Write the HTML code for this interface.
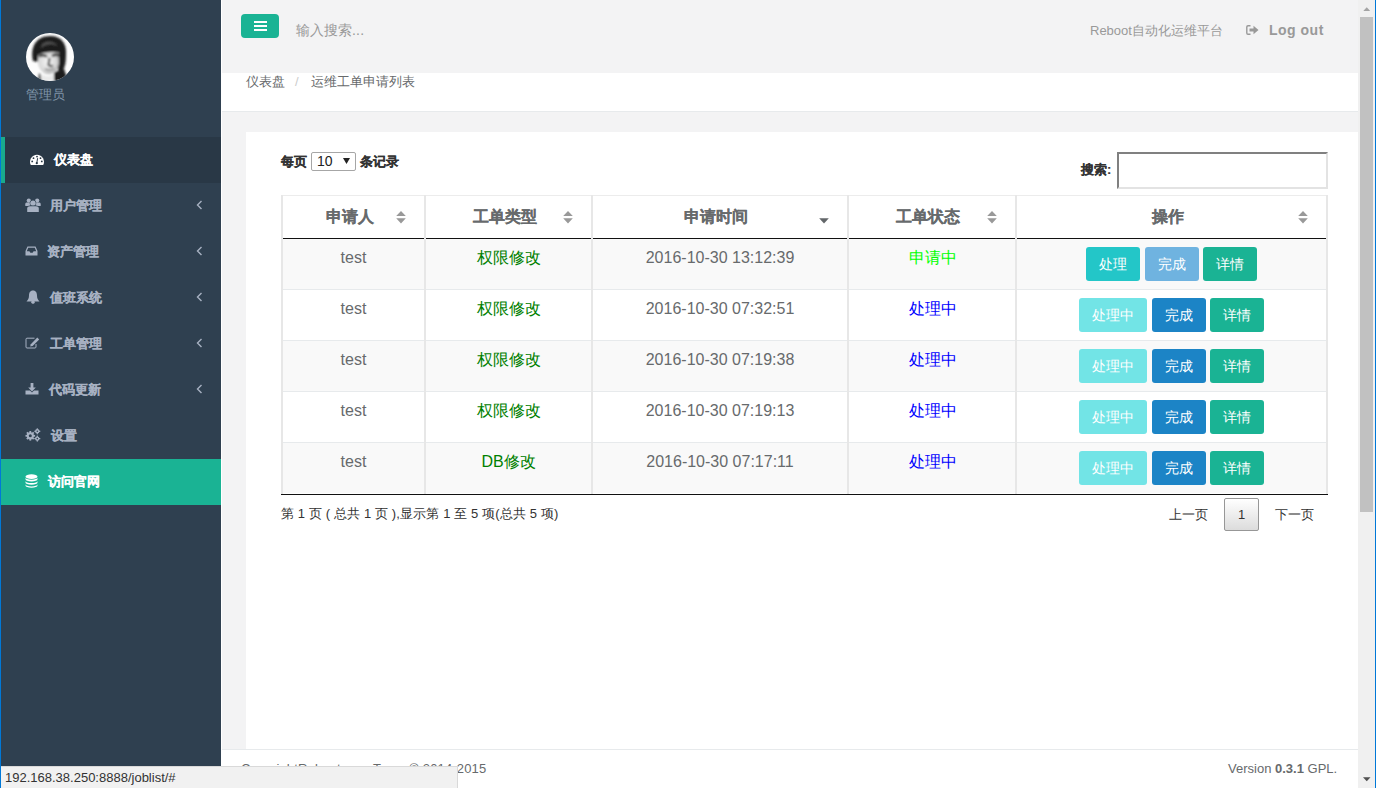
<!DOCTYPE html>
<html><head><meta charset="utf-8">
<style>
*{box-sizing:border-box;margin:0;padding:0}
html,body{width:1376px;height:788px;overflow:hidden;background:#f3f3f4}
body{position:relative;font-family:"Liberation Sans",sans-serif;font-size:13px;color:#676a6c}
.a{position:absolute}
.t{position:absolute;white-space:nowrap;line-height:1}
/* sidebar */
#side{left:1px;top:0;width:220px;height:788px;background:#2f4050}
.mi{position:absolute;left:0;width:220px;height:46px}
.ml{position:absolute;top:0;line-height:46px;font-size:13px;font-weight:bold;color:#a7b1c2;white-space:nowrap;-webkit-text-stroke-width:0.15px}
.chev{position:absolute;left:195px;top:17px}
/* page */
#wrapline{left:221px;top:0;width:1px;height:788px;background:#fff}
#page{left:222px;top:0;width:1136px;height:788px;background:#f3f3f4}
#crumb{left:222px;top:73px;width:1136px;height:39px;background:#fff;border-bottom:1px solid #e7eaec}
#ibox{left:246px;top:132px;width:1112px;height:617px;background:#fff}
#footer{left:222px;top:749px;width:1136px;height:39px;background:#fff;border-top:1px solid #e7eaec}
/* table */
.th{position:absolute;top:196px;height:42px;font-size:16px;font-weight:bold;color:#676a6c;line-height:42px;text-align:center;-webkit-text-stroke:0.15px #676a6c}
.vl{position:absolute;width:2px;background:#e7e7e7}
.hl{position:absolute;height:1px;background:#e7eaec}
.cell{position:absolute;font-size:16px;line-height:22px;text-align:center;white-space:nowrap}
.btn{position:absolute;height:34px;border-radius:3px;color:#fff;font-size:14px;line-height:34px;text-align:center}
/* scrollbar */
#sb{left:1358px;top:0;width:17px;height:788px;background:#f0f0f0}
#thumb{left:1360px;top:17px;width:13px;height:495px;background:#c1c1c1}
#status{left:0;top:766px;width:458px;height:22px;background:#f1f1f1;border-top:1px solid #d9d9d9;border-right:1px solid #d9d9d9}
</style></head><body>

<div id="page" class="a"></div>
<div id="wrapline" class="a"></div>

<!-- ================= SIDEBAR ================= -->
<div id="side" class="a">
  <svg class="a" style="left:25px;top:33px" width="48" height="48" viewBox="0 0 48 48">
    <defs><clipPath id="cc"><circle cx="24" cy="24" r="24"/></clipPath>
    <filter id="bl" x="-10%" y="-10%" width="120%" height="120%"><feGaussianBlur stdDeviation="0.8"/></filter>
    <radialGradient id="face" cx="45%" cy="45%" r="60%"><stop offset="0" stop-color="#f4f4f4"/><stop offset="0.7" stop-color="#d8d8d8"/><stop offset="1" stop-color="#9a9a9a"/></radialGradient></defs>
    <g clip-path="url(#cc)">
      <rect width="48" height="48" fill="#fdfdfd"/>
      <g filter="url(#bl)">
      <path d="M7 28 C4 14 10 3 24 3 C36 3 41 11 40 22 C40 29 39 34 37 37 L32 37 L32 22 L14 22 L13 29 Z" fill="#1f1f1f"/>
      <path d="M15 15 C19 11 26 10 32 13 C29 9 24 8 20 9 C17 10 15 12 15 15 Z" fill="#505050"/>
      <path d="M12 22 C16 19.5 28 18 33 19.5 L33 31 C32 37 29 40 23 41 C17 41 13 36 12 30 Z" fill="url(#face)"/>
      <path d="M13 23.5 C15.5 22 18 22 21 23.5 M26 23 C28.5 21.5 31 21.5 33 22.5" stroke="#222" stroke-width="2.2" fill="none"/>
      <path d="M23.5 25 L22.5 31.5 C23.5 33.5 25.5 33.5 27 32.5" stroke="#3a3a3a" stroke-width="2" fill="none"/>
      <path d="M19 36 C21 37 25 37 28 35.5" stroke="#6a6a6a" stroke-width="1.2" fill="none"/>
      <path d="M27 48 L28 40 C31 38 35 36 38 36 L42 48 Z" fill="#1a1a1a"/>
      <path d="M12 48 L13 40 L14.5 41 L15.5 48 Z" fill="#505050"/>
      <path d="M15.5 41 C19 44 25 44 28 40 L28 48 L15.5 48 Z" fill="#e9e9e9"/>
      </g>
    </g>
  </svg>
  <div class="t" style="left:25px;top:88px;font-size:13px;color:#8095a8">管理员</div>

  <!-- active -->
  <div class="mi" style="top:137px;background:#293846;border-left:4px solid #19aa8d">
    <svg class="a" style="left:25px;top:17px" width="14" height="11" viewBox="0 0 14 11">
      <path d="M0.8 11 A7 7 0 1 1 13.2 11 Z" fill="#fff"/>
      <circle cx="7" cy="2.6" r="0.9" fill="#293846"/><circle cx="3.5" cy="4.2" r="0.9" fill="#293846"/><circle cx="10.5" cy="4.2" r="0.9" fill="#293846"/>
      <circle cx="2.2" cy="7.4" r="0.9" fill="#293846"/><circle cx="11.8" cy="7.4" r="0.9" fill="#293846"/>
      <path d="M7.6 4.2 L6.8 9" stroke="#293846" stroke-width="1"/><circle cx="6.8" cy="9.2" r="1.1" fill="#293846"/>
    </svg>
    <div class="ml" style="left:49px;color:#fff">仪表盘</div>
  </div>
  <div class="mi" style="top:183px">
    <svg class="a" style="left:24px;top:15px" width="16" height="14" viewBox="0 0 16 14">
      <g fill="#a7b1c2">
      <circle cx="3.8" cy="2.6" r="2.1"/><circle cx="12.2" cy="2.6" r="2.1"/>
      <path d="M0.3 8 L0.3 6.2 C0.3 5 1.2 4.6 2.5 4.6 L5.5 4.6 L5.5 8 Z"/>
      <path d="M15.7 8 L15.7 6.2 C15.7 5 14.8 4.6 13.5 4.6 L10.5 4.6 L10.5 8 Z"/>
      </g>
      <circle cx="8" cy="5.3" r="3.2" fill="#2f4050"/>
      <circle cx="8" cy="5.3" r="2.7" fill="#a7b1c2"/>
      <path d="M1.6 14 L1.6 10.5 C1.6 8.6 3 7.6 5 7.6 L11 7.6 C13 7.6 14.4 8.6 14.4 10.5 L14.4 14 Z" fill="#2f4050"/>
      <path d="M2.2 14 L2.2 10.6 C2.2 9 3.3 8.2 5 8.2 L11 8.2 C12.7 8.2 13.8 9 13.8 10.6 L13.8 14 Z" fill="#a7b1c2"/>
    </svg>
    <div class="ml" style="left:49px">用户管理</div>
    <svg class="chev" width="7" height="10" viewBox="0 0 7 10"><path d="M5.5 1 L1.5 5 L5.5 9" stroke="#a7b1c2" stroke-width="1.4" fill="none"/></svg>
  </div>
  <div class="mi" style="top:229px">
    <svg class="a" style="left:24px;top:17px" width="13" height="10" viewBox="0 0 13 10">
      <path d="M2.5 0.5 L10.5 0.5 L12.5 5 L12.5 9.5 L0.5 9.5 L0.5 5 Z" fill="#a7b1c2"/>
      <path d="M3.2 1.8 L9.8 1.8 L11.2 5.2 L8.6 5.2 L7.6 6.8 L5.4 6.8 L4.4 5.2 L1.8 5.2 Z" fill="#2f4050"/>
    </svg>
    <div class="ml" style="left:46px">资产管理</div>
    <svg class="chev" width="7" height="10" viewBox="0 0 7 10"><path d="M5.5 1 L1.5 5 L5.5 9" stroke="#a7b1c2" stroke-width="1.4" fill="none"/></svg>
  </div>
  <div class="mi" style="top:275px">
    <svg class="a" style="left:25px;top:15px" width="14" height="14" viewBox="0 0 14 14">
      <path d="M7 0.5 C4 0.5 3 3 3 5.5 C3 8.5 2 10 0.5 11.5 L13.5 11.5 C12 10 11 8.5 11 5.5 C11 3 10 0.5 7 0.5 Z" fill="#a7b1c2"/>
      <path d="M5.3 11.5 A1.7 1.7 0 0 0 8.7 11.5 Z" fill="#a7b1c2"/><circle cx="7" cy="12.2" r="1.6" fill="#a7b1c2"/>
    </svg>
    <div class="ml" style="left:49px">值班系统</div>
    <svg class="chev" width="7" height="10" viewBox="0 0 7 10"><path d="M5.5 1 L1.5 5 L5.5 9" stroke="#a7b1c2" stroke-width="1.4" fill="none"/></svg>
  </div>
  <div class="mi" style="top:321px">
    <svg class="a" style="left:24px;top:16px" width="15" height="12" viewBox="0 0 15 12">
      <path d="M9.5 1.2 L2 1.2 C1.3 1.2 1 1.6 1 2.2 L1 10 C1 10.6 1.3 11 2 11 L10 11 C10.6 11 11 10.6 11 10 L11 7" stroke="#a7b1c2" stroke-width="1" fill="none"/>
      <path d="M12.3 0.6 L14.2 2.4 L7.6 9 L5.2 9.6 L5.8 7.2 Z" fill="#a7b1c2"/>
    </svg>
    <div class="ml" style="left:49px">工单管理</div>
    <svg class="chev" width="7" height="10" viewBox="0 0 7 10"><path d="M5.5 1 L1.5 5 L5.5 9" stroke="#a7b1c2" stroke-width="1.4" fill="none"/></svg>
  </div>
  <div class="mi" style="top:367px">
    <svg class="a" style="left:24px;top:16px" width="14" height="12" viewBox="0 0 14 12">
      <path d="M5.6 0 L8.4 0 L8.4 4.5 L10.8 4.5 L7 8.5 L3.2 4.5 L5.6 4.5 Z" fill="#a7b1c2"/>
      <path d="M0.5 7.5 L5 7.5 L7 9.5 L9 7.5 L13.5 7.5 L13.5 11.5 L0.5 11.5 Z" fill="#a7b1c2"/>
    </svg>
    <div class="ml" style="left:48px">代码更新</div>
    <svg class="chev" width="7" height="10" viewBox="0 0 7 10"><path d="M5.5 1 L1.5 5 L5.5 9" stroke="#a7b1c2" stroke-width="1.4" fill="none"/></svg>
  </div>
  <div class="mi" style="top:413px">
    <svg class="a" style="left:24px;top:15px" width="16" height="14" viewBox="0 0 16 14">
      <g fill="#a7b1c2">
      <circle cx="5.3" cy="7.8" r="3.6"/>
      <rect x="4.4" y="3" width="1.8" height="9.6"/><rect x="0.5" y="6.9" width="9.6" height="1.8"/>
      <rect x="4.4" y="3" width="1.8" height="9.6" transform="rotate(45 5.3 7.8)"/><rect x="4.4" y="3" width="1.8" height="9.6" transform="rotate(-45 5.3 7.8)"/>
      <circle cx="12.3" cy="3.3" r="2.2"/><circle cx="12.3" cy="10.6" r="2.2"/>
      <rect x="11.7" y="0.3" width="1.2" height="6"/><rect x="9.3" y="2.7" width="6" height="1.2"/>
      <rect x="11.7" y="7.6" width="1.2" height="6"/><rect x="9.3" y="10" width="6" height="1.2"/>
      </g>
      <circle cx="5.3" cy="7.8" r="1.5" fill="#2f4050"/><circle cx="12.3" cy="3.3" r="0.8" fill="#2f4050"/><circle cx="12.3" cy="10.6" r="0.8" fill="#2f4050"/>
    </svg>
    <div class="ml" style="left:50px">设置</div>
  </div>
  <div class="mi" style="top:459px;background:#1ab394">
    <svg class="a" style="left:24px;top:15px" width="13" height="14" viewBox="0 0 13 14">
      <ellipse cx="6.5" cy="2.6" rx="6" ry="2.3" fill="#fff"/>
      <path d="M0.5 3.5 L0.5 5.2 C0.5 6.5 3 7.4 6.5 7.4 C10 7.4 12.5 6.5 12.5 5.2 L12.5 3.5 C12.5 4.8 10 5.7 6.5 5.7 C3 5.7 0.5 4.8 0.5 3.5 Z" fill="#fff"/>
      <path d="M0.5 6.9 L0.5 8.6 C0.5 9.9 3 10.8 6.5 10.8 C10 10.8 12.5 9.9 12.5 8.6 L12.5 6.9 C12.5 8.2 10 9.1 6.5 9.1 C3 9.1 0.5 8.2 0.5 6.9 Z" fill="#fff"/>
      <path d="M0.5 10.3 L0.5 11.6 C0.5 12.9 3 13.8 6.5 13.8 C10 13.8 12.5 12.9 12.5 11.6 L12.5 10.3 C12.5 11.6 10 12.5 6.5 12.5 C3 12.5 0.5 11.6 0.5 10.3 Z" fill="#fff"/>
    </svg>
    <div class="ml" style="left:47px;color:#fff">访问官网</div>
  </div>
</div>


<div id="crumb" class="a"></div>
<div id="ibox" class="a"></div>

<!-- ================= NAVBAR ================= -->
<div class="a" style="left:241px;top:14px;width:38px;height:24px;background:#1ab394;border-radius:4px">
  <div class="a" style="left:13px;top:7px;width:13px;height:2px;background:#fff"></div>
  <div class="a" style="left:13px;top:11px;width:13px;height:2px;background:#fff"></div>
  <div class="a" style="left:13px;top:15px;width:13px;height:2px;background:#fff"></div>
</div>
<div class="t" style="left:296px;top:23px;font-size:14px;color:#999">输入搜索<span style="letter-spacing:0.2px">...</span></div>
<div class="t" style="left:1090px;top:24px;font-size:13px;color:#999">Reboot自动化运维平台</div>
<svg class="a" style="left:1246px;top:25px" width="13" height="10" viewBox="0 0 13 10">
  <path d="M4.5 0.8 L2 0.8 C1.2 0.8 0.8 1.3 0.8 2 L0.8 8 C0.8 8.7 1.2 9.2 2 9.2 L4.5 9.2" stroke="#999" stroke-width="1.4" fill="none"/>
  <path d="M3.5 3.6 L7.5 3.6 L7.5 0.8 L12.5 5 L7.5 9.2 L7.5 6.4 L3.5 6.4 Z" fill="#999"/>
</svg>
<div class="t" style="left:1269px;top:23px;font-size:14px;font-weight:bold;color:#999;letter-spacing:0.5px">Log out</div>

<!-- ================= BREADCRUMB ================= -->
<div class="t" style="left:246px;top:75px;font-size:13px;color:#676a6c">仪表盘</div>
<div class="t" style="left:295px;top:75px;font-size:13px;color:#ccc">/</div>
<div class="t" style="left:311px;top:75px;font-size:13px;color:#676a6c">运维工单申请列表</div>

<div id="footer" class="a"></div>


<!-- ================= TABLE ================= -->
<div class="t" style="left:281px;top:155px;font-size:13px;font-weight:bold;color:#333;-webkit-text-stroke-width:0.15px">每页</div>
<div class="a" style="left:311px;top:152px;width:45px;height:19px;border:1px solid #a6a6a6;border-radius:2px;background:#fff"></div>
<div class="t" style="left:317px;top:154px;font-size:14px;color:#222">10</div>
<svg class="a" style="left:343px;top:158px" width="7" height="6" viewBox="0 0 7 6"><path d="M0 0 L7 0 L3.5 6 Z" fill="#222"/></svg>
<div class="t" style="left:360px;top:155px;font-size:13px;font-weight:bold;color:#333;-webkit-text-stroke-width:0.15px">条记录</div>
<div class="t" style="left:1081px;top:163px;font-size:13px;font-weight:bold;color:#333;-webkit-text-stroke-width:0.15px">搜索:</div>
<div class="a" style="left:1117px;top:152px;width:211px;height:37px;background:#fff;border-top:2px solid #808080;border-left:2px solid #808080;border-bottom:2px solid #e3e3e3;border-right:2px solid #e3e3e3"></div>
<div class="a" style="left:281px;top:195px;width:1047px;height:1px;background:#ececec"></div>
<div class="a" style="left:283px;top:239px;width:1043px;height:50px;background:#f9f9f9"></div>
<div class="a" style="left:283px;top:290px;width:1043px;height:50px;background:#fff"></div>
<div class="a" style="left:283px;top:341px;width:1043px;height:50px;background:#f9f9f9"></div>
<div class="a" style="left:283px;top:392px;width:1043px;height:50px;background:#fff"></div>
<div class="a" style="left:283px;top:443px;width:1043px;height:50px;background:#f9f9f9"></div>
<div class="hl" style="left:283px;top:289px;width:1043px"></div>
<div class="hl" style="left:283px;top:340px;width:1043px"></div>
<div class="hl" style="left:283px;top:391px;width:1043px"></div>
<div class="hl" style="left:283px;top:442px;width:1043px"></div>
<div class="a" style="left:281px;top:238px;width:1047px;height:1px;background:#111"></div>
<div class="a" style="left:281px;top:494px;width:1047px;height:1px;background:#111"></div>
<div class="vl" style="left:281px;top:195px;height:299px"></div>
<div class="vl" style="left:424px;top:195px;height:299px"></div>
<div class="vl" style="left:591px;top:195px;height:299px"></div>
<div class="vl" style="left:847px;top:195px;height:299px"></div>
<div class="vl" style="left:1015px;top:195px;height:299px"></div>
<div class="vl" style="left:1326px;top:195px;height:299px"></div>
<div class="th" style="left:283px;width:133px">申请人</div>
<div class="th" style="left:426px;width:157px">工单类型</div>
<div class="th" style="left:593px;width:246px">申请时间</div>
<div class="th" style="left:849px;width:158px">工单状态</div>
<div class="th" style="left:1017px;width:301px">操作</div>
<svg class="a" style="left:396px;top:211px" width="10" height="13" viewBox="0 0 10 13"><path d="M5 0 L9.8 5 L0.2 5 Z M0.2 7.2 L9.8 7.2 L5 12.6 Z" fill="#999"/></svg>
<svg class="a" style="left:563px;top:211px" width="10" height="13" viewBox="0 0 10 13"><path d="M5 0 L9.8 5 L0.2 5 Z M0.2 7.2 L9.8 7.2 L5 12.6 Z" fill="#999"/></svg>
<svg class="a" style="left:987px;top:211px" width="10" height="13" viewBox="0 0 10 13"><path d="M5 0 L9.8 5 L0.2 5 Z M0.2 7.2 L9.8 7.2 L5 12.6 Z" fill="#999"/></svg>
<svg class="a" style="left:1298px;top:211px" width="10" height="13" viewBox="0 0 10 13"><path d="M5 0 L9.8 5 L0.2 5 Z M0.2 7.2 L9.8 7.2 L5 12.6 Z" fill="#999"/></svg>
<svg class="a" style="left:819px;top:211px" width="10" height="13" viewBox="0 0 10 13"><path d="M0.2 7.2 L9.8 7.2 L5 12.6 Z" fill="#626669"/></svg>
<div class="cell" style="left:283px;top:247px;width:141px;color:#676a6c">test</div>
<div class="cell" style="left:426px;top:247px;width:165px;color:#008000">权限修改</div>
<div class="cell" style="left:593px;top:247px;width:254px;color:#676a6c">2016-10-30 13:12:39</div>
<div class="cell" style="left:850px;top:247px;width:166px;color:#00ff00">申请中</div>
<div class="btn" style="left:1086px;top:247px;width:54px;background:#23c6c8">处理</div>
<div class="btn" style="left:1145px;top:247px;width:54px;background:#6fb3e0">完成</div>
<div class="btn" style="left:1203px;top:247px;width:54px;background:#1ab394">详情</div>
<div class="cell" style="left:283px;top:298px;width:141px;color:#676a6c">test</div>
<div class="cell" style="left:426px;top:298px;width:165px;color:#008000">权限修改</div>
<div class="cell" style="left:593px;top:298px;width:254px;color:#676a6c">2016-10-30 07:32:51</div>
<div class="cell" style="left:850px;top:298px;width:166px;color:#0000ff">处理中</div>
<div class="btn" style="left:1079px;top:298px;width:68px;background:#72e4e6">处理中</div>
<div class="btn" style="left:1152px;top:298px;width:54px;background:#1c84c6">完成</div>
<div class="btn" style="left:1210px;top:298px;width:54px;background:#1ab394">详情</div>
<div class="cell" style="left:283px;top:349px;width:141px;color:#676a6c">test</div>
<div class="cell" style="left:426px;top:349px;width:165px;color:#008000">权限修改</div>
<div class="cell" style="left:593px;top:349px;width:254px;color:#676a6c">2016-10-30 07:19:38</div>
<div class="cell" style="left:850px;top:349px;width:166px;color:#0000ff">处理中</div>
<div class="btn" style="left:1079px;top:349px;width:68px;background:#72e4e6">处理中</div>
<div class="btn" style="left:1152px;top:349px;width:54px;background:#1c84c6">完成</div>
<div class="btn" style="left:1210px;top:349px;width:54px;background:#1ab394">详情</div>
<div class="cell" style="left:283px;top:400px;width:141px;color:#676a6c">test</div>
<div class="cell" style="left:426px;top:400px;width:165px;color:#008000">权限修改</div>
<div class="cell" style="left:593px;top:400px;width:254px;color:#676a6c">2016-10-30 07:19:13</div>
<div class="cell" style="left:850px;top:400px;width:166px;color:#0000ff">处理中</div>
<div class="btn" style="left:1079px;top:400px;width:68px;background:#72e4e6">处理中</div>
<div class="btn" style="left:1152px;top:400px;width:54px;background:#1c84c6">完成</div>
<div class="btn" style="left:1210px;top:400px;width:54px;background:#1ab394">详情</div>
<div class="cell" style="left:283px;top:451px;width:141px;color:#676a6c">test</div>
<div class="cell" style="left:426px;top:451px;width:165px;color:#008000">DB修改</div>
<div class="cell" style="left:593px;top:451px;width:254px;color:#676a6c">2016-10-30 07:17:11</div>
<div class="cell" style="left:850px;top:451px;width:166px;color:#0000ff">处理中</div>
<div class="btn" style="left:1079px;top:451px;width:68px;background:#72e4e6">处理中</div>
<div class="btn" style="left:1152px;top:451px;width:54px;background:#1c84c6">完成</div>
<div class="btn" style="left:1210px;top:451px;width:54px;background:#1ab394">详情</div>
<div class="t" style="left:281px;top:507px;font-size:13px;color:#333;letter-spacing:0.12px">第 1 页 ( 总共 1 页 ),显示第 1 至 5 项(总共 5 项)</div>
<div class="t" style="left:1169px;top:508px;font-size:13px;color:#333">上一页</div>
<div class="a" style="left:1224px;top:498px;width:35px;height:33px;border:1px solid #979797;border-radius:2px;background:linear-gradient(#fff,#dcdcdc)"></div>
<div class="t" style="left:1238px;top:508px;font-size:13px;color:#333">1</div>
<div class="t" style="left:1275px;top:508px;font-size:13px;color:#333">下一页</div>
<div class="t" style="left:241px;top:762px;font-size:13px;color:#676a6c;letter-spacing:0.15px">CopyrightReboot.com Team © 2014-2015</div>
<div class="t" style="left:1228px;top:762px;font-size:13px;color:#676a6c">Version <b>0.3.1</b> GPL.</div>
<div id="sb" class="a"></div>
<div id="thumb" class="a"></div>
<svg class="a" style="left:1363px;top:6.5px" width="7.5" height="4.5" viewBox="0 0 9 5"><path d="M0 5 L4.5 0 L9 5 Z" fill="#a3a3a3"/></svg>
<svg class="a" style="left:1363px;top:777px" width="7.5" height="4.5" viewBox="0 0 9 5"><path d="M0 0 L9 0 L4.5 5 Z" fill="#505050"/></svg>
<div id="status" class="a"></div>
<div class="t" style="left:5px;top:771px;font-size:13px;color:#333">192.168.38.250:8888/joblist/#</div>
<div class="a" style="left:0;top:0;width:1px;height:788px;background:#0078d7"></div>
<div class="a" style="left:1375px;top:0;width:1px;height:788px;background:#0078d7"></div>
</body></html>
